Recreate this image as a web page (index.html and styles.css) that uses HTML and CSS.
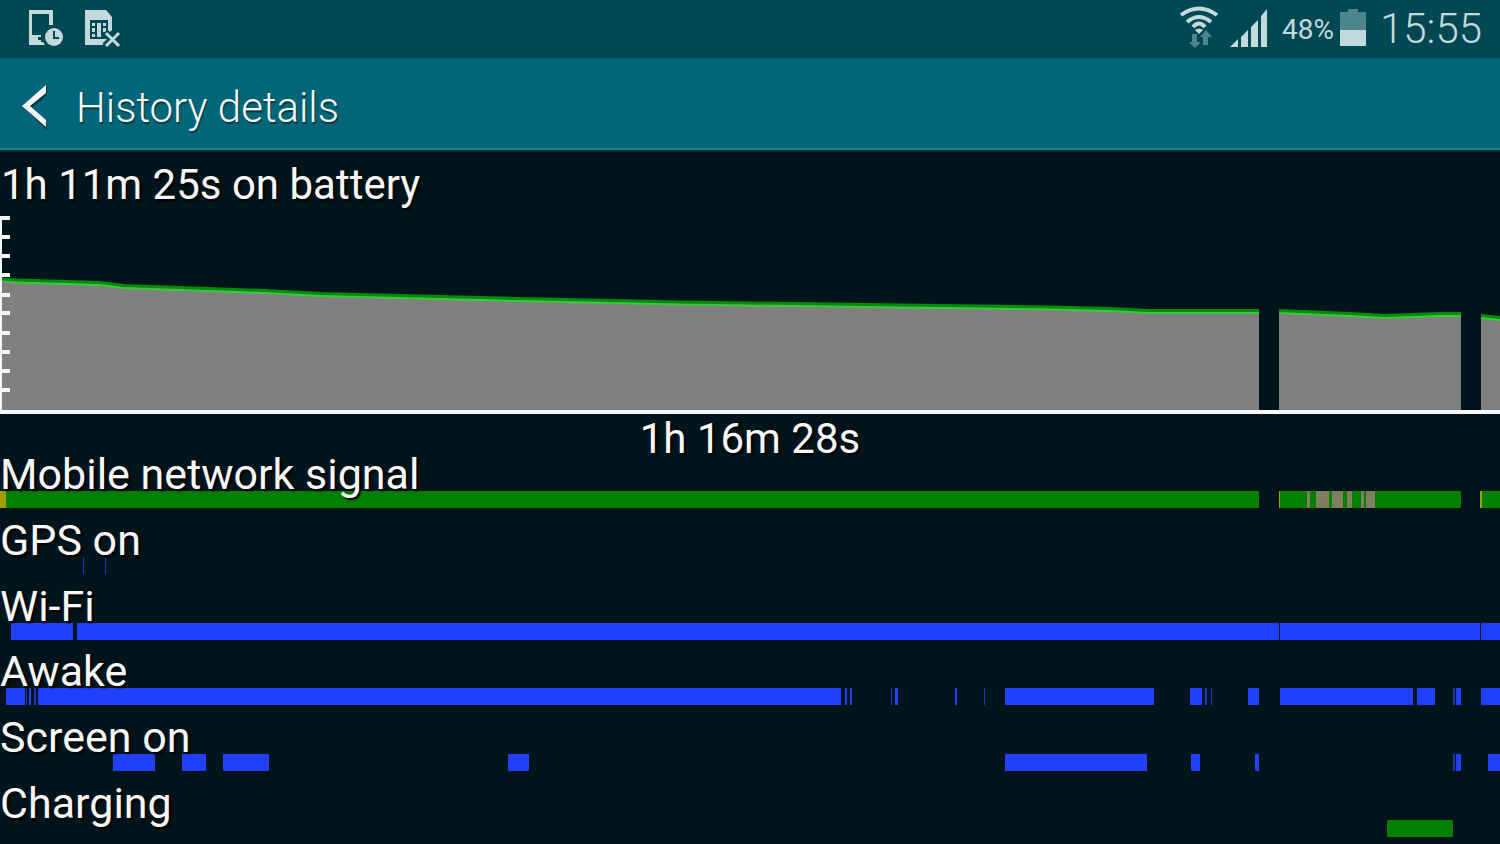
FILE: index.html
```
<!DOCTYPE html>
<html lang="en">
<head>
    <meta charset="UTF-8">
    <meta name="viewport" content="width=device-width, initial-scale=1.0">
    <title>History details</title>
    <link rel="stylesheet" href="styles.css">
</head>
<body>
    <div class="status-bar">
        <div class="notifications">
            <svg width="36" height="40" viewBox="0 0 36 40">
                <path fill="#c3dadd" fill-rule="evenodd" d="M1 1h24v15h-4V5H4v21h9v2h-3v3h3v2h2l2 3H1z"/>
                <circle cx="26" cy="28" r="9" fill="#c3dadd"/>
                <path d="M26 22v7h5" fill="none" stroke="#004854" stroke-width="2"/>
            </svg>
            <svg width="36" height="40" viewBox="0 0 36 40">
                <path fill="#c3dadd" d="M0 1h21l6 7v13l-7 7 3 3-5 5H0z"/>
                <path fill="#004854" d="M5 11h18v19H5z"/>
                <path fill="#c3dadd" d="M7 14h3v3H7zM7 19h3v4H7zM7 25h3v3H7zM12 14h4v14h-4zM18 14h3v3h-3zM18 19h3v4h-3z"/>
                <path d="M20 23l14 14M34 23L20 37" fill="none" stroke="#004854" stroke-width="7"/>
                <path d="M21 24l13 13M34 24L21 37" fill="none" stroke="#c3dadd" stroke-width="3"/>
            </svg>
        </div>
        <div class="system">
            <svg width="40" height="44" viewBox="0 0 40 44">
                <g fill="none" stroke="#c3dadd" stroke-width="4">
                    <path d="M2 10q18 -13 36 0"/>
                    <path d="M8 17q12 -10 24 0"/>
                    <path d="M14 22q6 -7 12 0"/>
                </g>
                <path fill="#c3dadd" d="M16 25q4 -3 8 0l-4 4z"/>
                <path fill="#4e848c" d="M13 29h5v8h4l-6 6-6-6h3zM24 40h5v-8h4l-6-7-6 7h3z"/>
            </svg>
            <svg class="signal" width="38" height="44" viewBox="0 0 38 44">
                <path fill="#c3dadd" d="M0 42l8-8v8zM11 32l7-7v17h-7zM21 22l7-7v27h-7zM31 11l6-7v38h-6z"/>
            </svg>
            <span class="percent">48%</span>
            <svg class="battery" width="26" height="44" viewBox="0 0 26 44">
                <path fill="#4e848c" d="M0 7h8V4h10v3h8v18H0z"/>
                <path fill="#c3dadd" d="M0 25h26v16H0z"/>
            </svg>
            <span class="clock">15:55</span>
        </div>
    </div>

    <header class="action-bar">
        <button class="back" aria-label="Back">
            <svg width="26" height="46" viewBox="0 0 26 46">
                <path fill="#003a45" d="M25 3v8L9 25l16 14v7L2 24z"/>
                <path fill="#f8f8f8" d="M24 1v8L8 22l16 14v7L0 22z"/>
            </svg>
        </button>
        <h1 class="title">History details</h1>
    </header>

    <main class="history">
        <h2 class="on-battery">1h 11m 25s on battery</h2>

        <svg class="chart" viewBox="0 0 1500 198" preserveAspectRatio="none">
            <!-- battery level -->
            <path fill="#808080" d="M2 64L100 68L124 71L265 76L320 80L480 84L680 88L900 91L1050 92L1110 93L1148 95H1259V194H2z"/>
            <path fill="#808080" d="M1279 95L1385 100L1440 98H1461V194H1279z"/>
            <path fill="#808080" d="M1481 101L1500 103V194H1481z"/>
            <g fill="none" stroke="#3cc83c" stroke-width="3">
                <path d="M2 64L16 66L100 68.5L124 71.5L265 76.5L320 79.5L480 83.5L680 88L900 91L1050 93L1110 94.5L1148 96.5H1259"/>
                <path d="M1279 96.5L1350 99.5L1385 101.5L1440 99.5H1461"/>
                <path d="M1481 101.5L1500 103.5"/>
            </g>
            <g fill="none" stroke="#008c0c" stroke-width="3">
                <path d="M2 63L16 64L100 66.5L124 69.5L265 74.5L320 77.5L480 81.5L680 86L900 89L1050 91L1110 92.5L1148 94.5H1259"/>
                <path d="M1279 94.5L1350 97.5L1385 99.5L1440 97.5H1461"/>
                <path d="M1481 99.5L1500 101.5"/>
            </g>
            <!-- axes -->
            <path fill="#f8f8f8" d="M0 0h2v194h1498v4H0z"/>
            <path fill="#f8f8f8" d="M0 0h10v4H0zM0 19h10v4H0zM0 38h10v4H0zM0 57h10v4H0zM0 77h10v4H0zM0 95h10v4H0zM0 115h10v4H0zM0 134h10v4H0zM0 153h10v4H0zM0 172h10v4H0z"/>
        </svg>
        <p class="total-time">1h 16m 28s</p>

        <div class="rows">
            <div class="row">
                <span class="label">Mobile network signal</span>
                <svg class="track" viewBox="0 0 1500 17" preserveAspectRatio="none">
                    <path class="good" d="M6 0H1259V17H6zM1280 0H1461V17H1280zM1482 0H1500V17H1482z"/>
                    <path class="poor" d="M0 0h6v17h-6zM1279 0h1v17h-1zM1480 0h2v17h-2z"/>
                    <path class="weak" d="M1307 0h3v17h-3zM1316 0h13v17h-13zM1332 0h11v17h-11zM1347 0h5v17h-5zM1361 0h3v17h-3zM1366 0h9v17h-9z"/>
                </svg>
            </div>
            <div class="row">
                <span class="label">GPS on</span>
                <svg class="track" viewBox="0 0 1500 17" preserveAspectRatio="none">
                    <path class="brief" d="M83 0h1v17h-1zM105 0h1v17h-1z"/>
                </svg>
            </div>
            <div class="row">
                <span class="label">Wi-Fi</span>
                <svg class="track" viewBox="0 0 1500 17" preserveAspectRatio="none">
                    <path class="active" d="M11 0H73V17H11zM77 0H1279V17H77zM1280 0H1480V17H1280zM1481 0H1500V17H1481z"/>
                </svg>
            </div>
            <div class="row">
                <span class="label">Awake</span>
                <svg class="track" viewBox="0 0 1500 17" preserveAspectRatio="none">
                    <path class="active" d="M6 0H25V17H6zM29 0h2v17h-2zM38 0H841V17H38zM845 0h2v17h-2zM850 0h2v17h-2zM895 0h3v17h-3zM955 0h2v17h-2zM1005 0H1154V17H1005zM1190 0H1202V17H1190zM1248 0H1259V17H1248zM1280 0H1413V17H1280zM1417 0H1435V17H1417zM1456 0H1461V17H1456zM1481 0H1500V17H1481z"/>
                    <path class="brief" d="M26 0h1v17h-1zM34 0h2v17h-2zM891 0h1v17h-1zM984 0h1v17h-1zM1205 0h2v17h-2zM1211 0h1v17h-1zM1453 0h2v17h-2z"/>
                </svg>
            </div>
            <div class="row">
                <span class="label">Screen on</span>
                <svg class="track" viewBox="0 0 1500 17" preserveAspectRatio="none">
                    <path class="active" d="M113 0H155V17H113zM182 0H206V17H182zM223 0H269V17H223zM508 0H529V17H508zM1005 0H1147V17H1005zM1191 0H1200V17H1191zM1255 0H1259V17H1255zM1456 0H1461V17H1456zM1488 0H1500V17H1488z"/>
                    <path class="brief" d="M1453 0h2v17h-2z"/>
                </svg>
            </div>
            <div class="row">
                <span class="label">Charging</span>
                <svg class="track" viewBox="0 0 1500 17" preserveAspectRatio="none">
                    <path class="good" d="M1387 0H1453V17H1387z"/>
                </svg>
            </div>
        </div>
    </main>
</body>
</html>
```

FILE: styles.css
```
* {
    box-sizing: border-box;
}
body {
    display: flex;
    flex-direction: column;
    min-height: 100vh;
    margin: 0;
    background-color: #00141b;
    color: #f8f8f8;
    font-family: Roboto, sans-serif;
}
svg {
    display: block;
}
h1, h2, p {
    margin: 0;
    font-weight: 400;
}

/* Status bar */
.status-bar {
    display: flex;
    justify-content: space-between;
    align-items: center;
    height: 58px;
    padding: 0 18px 0 28px;
    background-color: #004854;
    color: #c3dadd;
}
.notifications {
    display: flex;
    gap: 21px;
}
.system {
    display: flex;
    align-items: center;
}
.system svg {
    margin-bottom: 4px;
}
.signal {
    margin-left: 11px;
}
.percent {
    margin-left: 14px;
    font-size: 28px;
}
.battery {
    margin-left: 6px;
}
.clock {
    margin-left: 14px;
    font-size: 42px;
    font-weight: 300;
    line-height: 56px;
}

/* Action bar */
.action-bar {
    display: flex;
    align-items: center;
    height: 94px;
    padding: 6px 0 0 22px;
    background-color: #006678;
    border-bottom: 2px solid #00303a;
    box-shadow: inset 0 -2px #237c8c;
}
.back {
    padding: 0;
    border: 0;
    background: none;
    cursor: pointer;
}
.title {
    margin-left: 28px;
    font-size: 42px;
    font-weight: 300;
    text-shadow: 1px 2px 1px #003a45;
}

/* History */
.history {
    display: flex;
    flex: 1;
    flex-direction: column;
    padding-bottom: 7px;
    font-size: 42px;
    text-shadow: 2px 2px 2px #000;
}
.on-battery {
    padding: 2px 0 0 1px;
    font-size: 42px;
    line-height: 62px;
}
.chart {
    width: 100%;
    height: 198px;
}
.total-time {
    padding-top: 6px;
    line-height: 38px;
    text-align: center;
}
.rows {
    display: flex;
    flex: 1;
    flex-direction: column;
    justify-content: space-between;
    font-size: 43px;
}
.row {
    display: flex;
    flex-direction: column;
}
.label {
    z-index: 1; /* descenders stay above the bar */
    line-height: 33px;
}
.track {
    width: 100%;
    height: 17px;
}
.good {
    fill: #008000;
}
.poor {
    fill: #a0a000;
}
.weak {
    fill: #808060;
}
.active {
    fill: #203fff;
}
.brief {
    fill: #1a34c8;
}
```
